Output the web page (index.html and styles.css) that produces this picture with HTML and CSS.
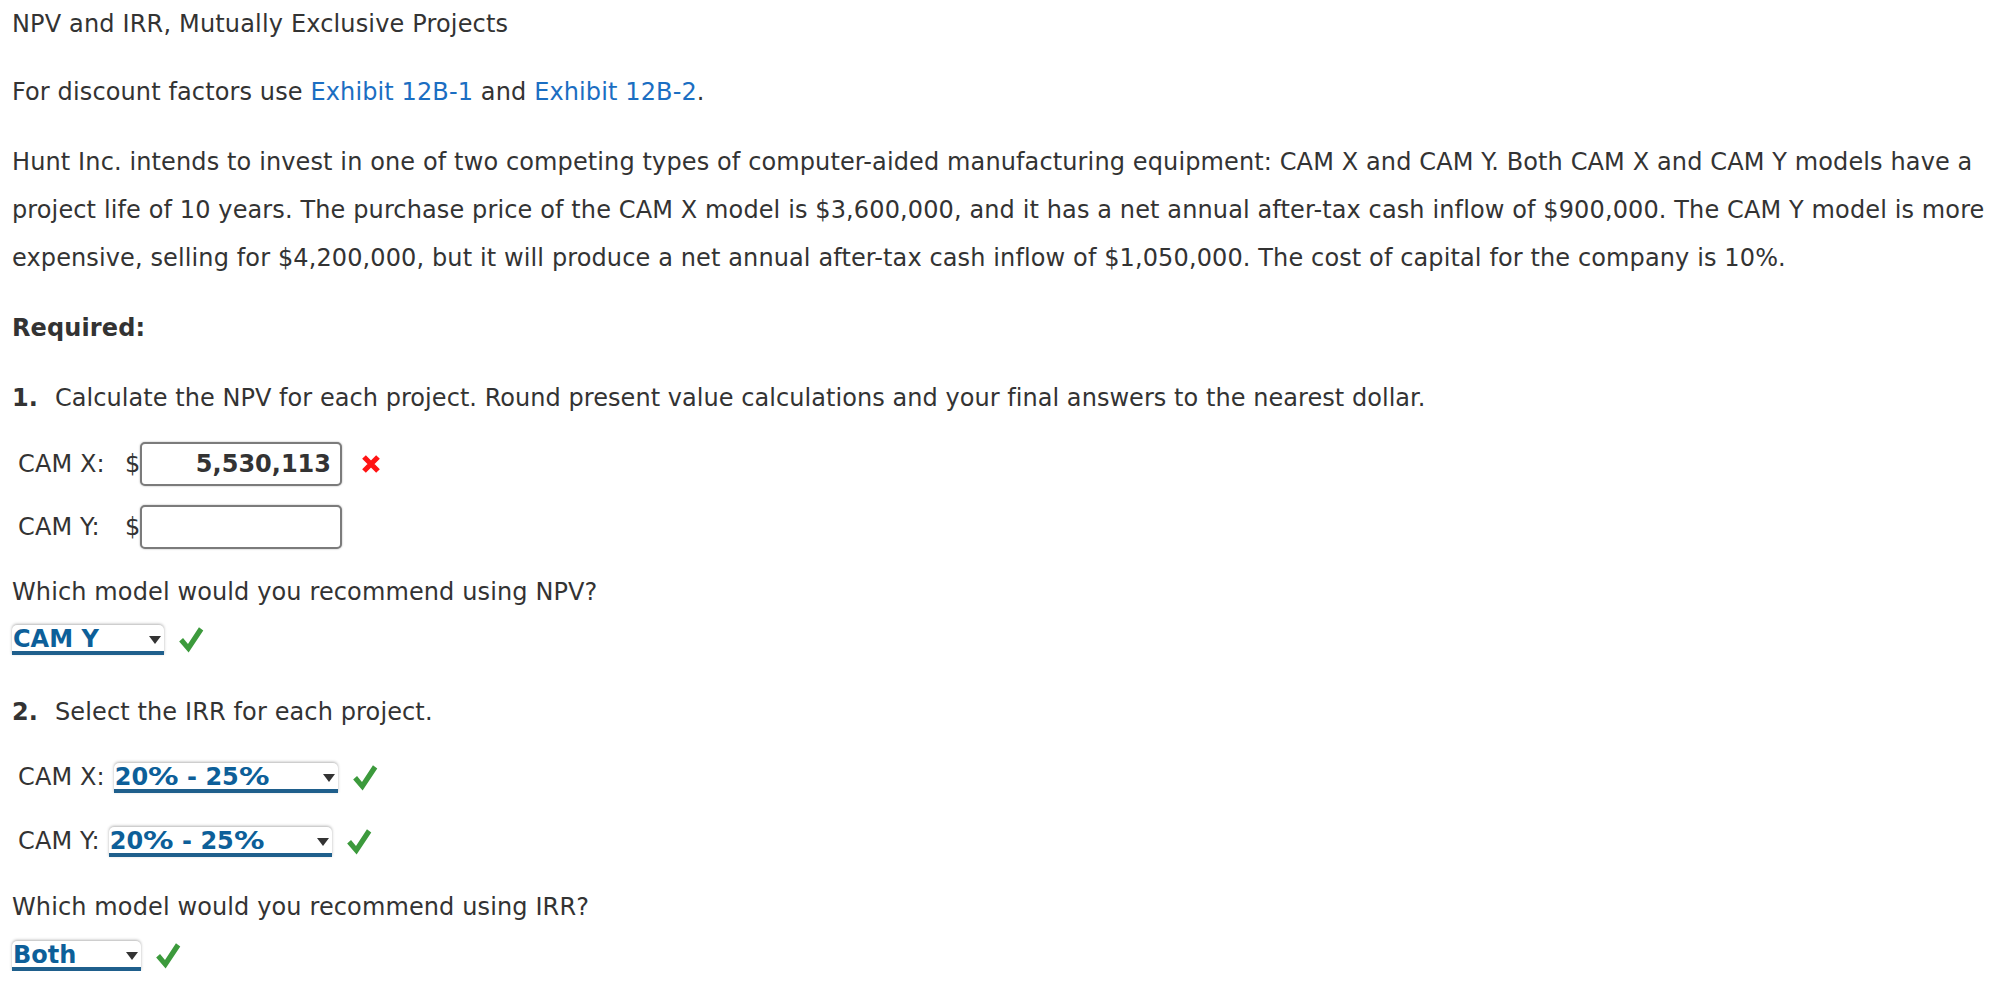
FILE: index.html
```html
<!DOCTYPE html>
<html>
<head>
<meta charset="utf-8">
<link rel="stylesheet" href="styles.css">
</head>
<body>
<div class="page">
  <p class="title">NPV and IRR, Mutually Exclusive Projects</p>
  <p class="para">For discount factors use <a class="link" href="#">Exhibit 12B-1</a> and <a class="link" href="#">Exhibit 12B-2</a>.</p>
  <p class="para nowrap">Hunt Inc. intends to invest in one of two competing types of computer-aided manufacturing equipment: CAM X and CAM Y. Both CAM X and CAM Y models have a<br>project life of 10 years. The purchase price of the CAM X model is $3,600,000, and it has a net annual after-tax cash inflow of $900,000. The CAM Y model is more<br>expensive, selling for $4,200,000, but it will produce a net annual after-tax cash inflow of $1,050,000. The cost of capital for the company is 10%.</p>
  <p class="para"><b>Required:</b></p>
  <p class="para q1"><b class="num">1.</b>Calculate the NPV for each project. Round present value calculations and your final answers to the nearest dollar.</p>

  <div class="npv-rows">
    <div class="npv-row">
      <span class="lbl">CAM X:</span><span class="cur">$</span><span class="inp">5,530,113</span>
      <svg class="xmark" viewBox="0 0 18 18" width="18" height="18"><path d="M2 2 L16 16 M16 2 L2 16" stroke="#ff1414" stroke-width="5.2" fill="none"/></svg>
    </div>
    <div class="npv-row">
      <span class="lbl">CAM Y:</span><span class="cur">$</span><span class="inp"></span>
    </div>
  </div>

  <p class="para ask1">Which model would you recommend using NPV?</p>
  <div class="sel-row r-npv">
    <span class="sel w-npv"><span class="sel-text">CAM Y</span><span class="arrow"></span></span>
    <svg class="check" viewBox="0 0 24 26" width="26" height="28"><path d="M1 14.5 L4.6 11.2 L9.2 16.6 L19.4 1.2 L23.4 4.2 L9.8 24.5 Z" fill="#3c9a3c"/></svg>
  </div>

  <p class="para q2"><b class="num">2.</b>Select the IRR for each project.</p>
  <div class="sel-row r-irr1">
    <span class="lbl2">CAM X:</span>
    <span class="sel w-irrx"><span class="sel-text">20<span class="pct">%</span> - 25<span class="pct">%</span></span><span class="arrow"></span></span>
    <svg class="check" viewBox="0 0 24 26" width="26" height="28"><path d="M1 14.5 L4.6 11.2 L9.2 16.6 L19.4 1.2 L23.4 4.2 L9.8 24.5 Z" fill="#3c9a3c"/></svg>
  </div>
  <div class="sel-row r-irr2">
    <span class="lbl2">CAM Y:</span>
    <span class="sel w-irry"><span class="sel-text">20<span class="pct">%</span> - 25<span class="pct">%</span></span><span class="arrow"></span></span>
    <svg class="check" viewBox="0 0 24 26" width="26" height="28"><path d="M1 14.5 L4.6 11.2 L9.2 16.6 L19.4 1.2 L23.4 4.2 L9.8 24.5 Z" fill="#3c9a3c"/></svg>
  </div>

  <p class="para ask2">Which model would you recommend using IRR?</p>
  <div class="sel-row r-both">
    <span class="sel w-both"><span class="sel-text">Both</span><span class="arrow"></span></span>
    <svg class="check" viewBox="0 0 24 26" width="26" height="28"><path d="M1 14.5 L4.6 11.2 L9.2 16.6 L19.4 1.2 L23.4 4.2 L9.8 24.5 Z" fill="#3c9a3c"/></svg>
  </div>
</div>
</body>
</html>
```
FILE: styles.css
```css
html, body {
  margin: 0;
  padding: 0;
  background: #ffffff;
}
body {
  font-family: "DejaVu Sans", Verdana, sans-serif;
  font-size: 24px;
  color: #333333;
  letter-spacing: 0.12px;
}
.page {
  padding: 0 0 0 12px;
}
p {
  margin: 0;
}
.title {
  line-height: 48px;
  margin-bottom: 20px;
  letter-spacing: 0.16px;
}
.para {
  line-height: 48px;
  margin-bottom: 22px;
}
.nowrap {
  white-space: nowrap;
}
.link {
  color: #1b6ec2;
  text-decoration: none;
}
b {
  font-weight: bold;
}
.num {
  display: inline-block;
  width: 43px;
}
.q1 {
  margin-bottom: 20px;
  letter-spacing: 0.05px;
}
.npv-rows {
  display: flex;
  flex-direction: column;
  gap: 19px;
}
.npv-row {
  display: flex;
  align-items: center;
  height: 44px;
}
.lbl {
  width: 107px;
  padding-left: 6px;
}
.cur {
  width: 15px;
}
.inp {
  box-sizing: border-box;
  width: 202px;
  height: 44px;
  border: 2px solid #7b7b7b;
  border-radius: 5px;
  box-shadow: 0 0 2px rgba(0, 0, 0, 0.35);
  font-weight: bold;
  text-align: right;
  padding-right: 9px;
  line-height: 40px;
  background: #fff;
  letter-spacing: 0;
}
.xmark {
  margin-left: 20px;
}
.ask1 {
  margin-top: 19px;
  margin-bottom: 9px;
}
.sel-row {
  display: flex;
  align-items: baseline;
}
.lbl2 {
  padding-left: 6px;
  margin-right: 9px;
}
.sel {
  position: relative;
  box-sizing: border-box;
  display: inline-block;
  height: 30px;
  background: #fff;
  border-bottom: 4px solid #1f5f8c;
  border-radius: 5px 5px 0 0;
  box-shadow: 0 -1px 3px rgba(0, 0, 0, 0.3);
  padding-left: 1px;
}
.sel-text {
  font-weight: bold;
  color: #0d5f99;
  line-height: 27px;
  letter-spacing: 0;
}
.pct {
  display: inline-block;
  transform: scaleX(1.27);
  transform-origin: left center;
  margin-right: 6.5px;
}
.arrow {
  position: absolute;
  right: 3px;
  top: 11px;
  width: 0;
  height: 0;
  border-left: 6.5px solid transparent;
  border-right: 6.5px solid transparent;
  border-top: 8px solid #333;
}
.check {
  align-self: center;
  margin-left: 14px;
}
.w-npv { width: 152px; }
.w-irrx { width: 224px; }
.w-irry { width: 223px; }
.w-both { width: 129px; }
.q2 {
  margin-top: 33px;
  margin-bottom: 27px;
}
.r-irr2 {
  margin-top: 34px;
}
.ask2 {
  margin-top: 26px;
  margin-bottom: 10px;
}
```
